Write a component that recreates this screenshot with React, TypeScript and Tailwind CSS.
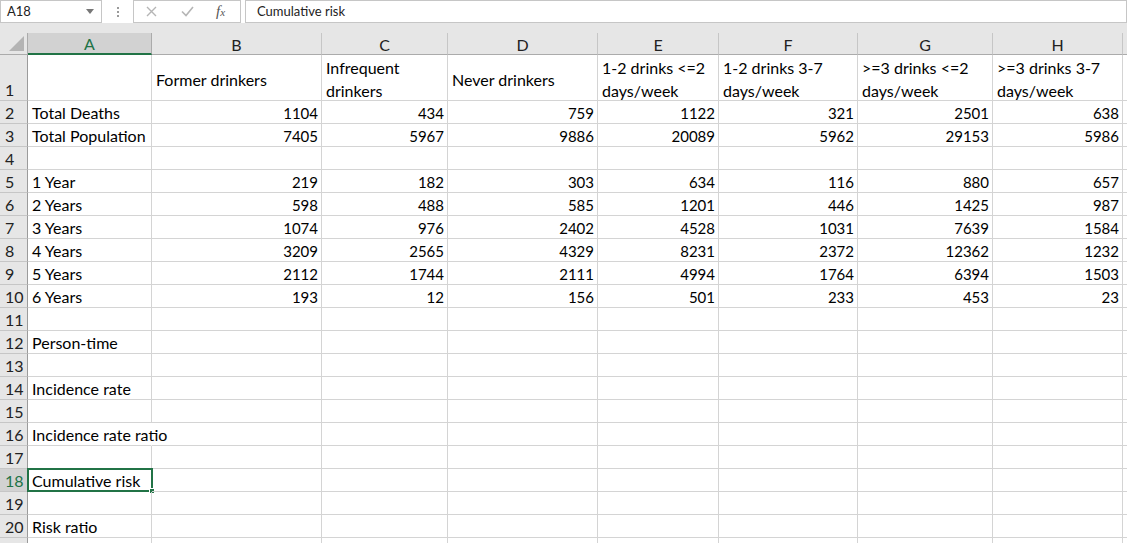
import React from 'react';

const COLS = ['A', 'B', 'C', 'D', 'E', 'F', 'G', 'H'];

type Row = { n: number; cells: (string | number)[]; tall?: boolean };

const ROWS: Row[] = [
  {
    n: 1,
    tall: true,
    cells: [
      '',
      'Former drinkers',
      'Infrequent drinkers',
      'Never drinkers',
      '1-2 drinks <=2 days/week',
      '1-2 drinks 3-7 days/week',
      '>=3 drinks <=2 days/week',
      '>=3 drinks 3-7 days/week',
    ],
  },
  { n: 2, cells: ['Total Deaths', 1104, 434, 759, 1122, 321, 2501, 638] },
  { n: 3, cells: ['Total Population', 7405, 5967, 9886, 20089, 5962, 29153, 5986] },
  { n: 4, cells: [] },
  { n: 5, cells: ['1 Year', 219, 182, 303, 634, 116, 880, 657] },
  { n: 6, cells: ['2 Years', 598, 488, 585, 1201, 446, 1425, 987] },
  { n: 7, cells: ['3 Years', 1074, 976, 2402, 4528, 1031, 7639, 1584] },
  { n: 8, cells: ['4 Years', 3209, 2565, 4329, 8231, 2372, 12362, 1232] },
  { n: 9, cells: ['5 Years', 2112, 1744, 2111, 4994, 1764, 6394, 1503] },
  { n: 10, cells: ['6 Years', 193, 12, 156, 501, 233, 453, 23] },
  { n: 11, cells: [] },
  { n: 12, cells: ['Person-time'] },
  { n: 13, cells: [] },
  { n: 14, cells: ['Incidence rate'] },
  { n: 15, cells: [] },
  { n: 16, cells: ['Incidence rate ratio'] },
  { n: 17, cells: [] },
  { n: 18, cells: ['Cumulative risk'] },
  { n: 19, cells: [] },
  { n: 20, cells: ['Risk ratio'] },
  { n: 21, cells: [] },
];

const SELECTED_ROW = 18;

function FormulaBar() {
  return (
    <div className="flex h-[23px] items-stretch bg-white text-[13px] text-[#222]">
      {/* name box */}
      <div className="flex w-[102px] items-center justify-between border border-[#c6c6c6] bg-white pl-[6px] pr-[7px]">
        <span>A18</span>
        <svg width="8" height="5" viewBox="0 0 8 5">
          <path d="M0 0h8L4 5z" fill="#777" />
        </svg>
      </div>
      <div className="flex w-[31px] flex-col items-center justify-center gap-[2px]">
        <span className="h-[2px] w-[2px] bg-[#9a9a9a]" />
        <span className="h-[2px] w-[2px] bg-[#9a9a9a]" />
        <span className="h-[2px] w-[2px] bg-[#9a9a9a]" />
      </div>
      <div className="flex w-[108px] items-center border border-[#c6c6c6] bg-white pl-[12px]">
        <svg width="11" height="11" viewBox="0 0 11 11">
          <path d="M1 1l9 9M10 1l-9 9" stroke="#b5b5b5" strokeWidth="1.4" />
        </svg>
        <svg className="ml-[24px]" width="13" height="11" viewBox="0 0 13 11">
          <path d="M1 5.5l4 4L12 1" stroke="#b5b5b5" strokeWidth="1.6" fill="none" />
        </svg>
        <span className="ml-[22px] font-['Liberation_Serif',serif] text-[15px] italic text-[#555]">
          f<span className="text-[11px]">x</span>
        </span>
      </div>
      <div className="ml-[4px] flex flex-1 items-center border border-[#c6c6c6] bg-white pl-[11px]">
        Cumulative risk
      </div>
    </div>
  );
}

export default function App() {
  return (
    <div className="h-[543px] w-[1127px] overflow-hidden bg-white font-['Lato','Noto_Sans',sans-serif] text-[16px] text-black">
      <FormulaBar />
      <div className="h-[10px] bg-[#e6e6e6]" />
      <div className="grid grid-cols-[28px_124px_170px_126px_150px_121px_139px_135px_130px_1fr]">
        {/* column headers */}
        <div className="relative h-[22px] border-b border-r border-[#ababab] bg-[#e6e6e6]">
          <svg className="absolute bottom-[3px] right-[3px]" width="15" height="15" viewBox="0 0 15 15">
            <path d="M15 0V15H0z" fill="#b4b4b4" />
          </svg>
        </div>
        {COLS.map((c) => (
          <div
            key={c}
            className={
              c === 'A'
                ? 'flex h-[22px] items-center justify-center border-b-2 border-r border-b-[#217346] border-r-[#ababab] bg-[#d2d2d2] pt-[1px] text-[#217346]'
                : 'flex h-[22px] items-center justify-center border-b border-r border-b-[#ababab] border-r-[#c6c6c6] bg-[#e6e6e6] pt-[2px] text-[#222]'
            }
          >
            {c}
          </div>
        ))}
        <div className="h-[22px] border-b border-[#ababab] bg-[#e6e6e6]" />

        {ROWS.map((row) => {
          const h = row.tall ? 'h-[46px]' : 'h-[23px]';
          const sel = row.n === SELECTED_ROW;
          return (
            <React.Fragment key={row.n}>
              <div
                className={`flex ${h} items-end border-b border-r border-b-[#c6c6c6] border-r-[#9b9b9b] pl-[5px] leading-[20px] ${
                  sel ? 'bg-[#d2d2d2] text-[#217346]' : 'bg-[#e6e6e6] text-[#222]'
                }`}
              >
                {row.n === 21 ? '' : row.n}
              </div>
              {COLS.map((c, i) => {
                const v = row.cells[i];
                const isNum = typeof v === 'number';
                const overflow = row.n === 16 && i === 0;
                if (row.tall && i > 0) {
                  return (
                    <div
                      key={c}
                      className={`flex ${h} items-center border-b border-r border-[#d4d4d4] pl-[4px] pt-[3px] leading-[23px]`}
                    >
                      <span className="block">{v}</span>
                    </div>
                  );
                }
                return (
                  <div
                    key={c}
                    className={`relative flex ${h} items-end border-b leading-[20px] ${
                      overflow ? 'z-10 border-r border-b-[#d4d4d4] border-r-transparent' : 'border-r border-[#d4d4d4]'
                    } ${isNum ? 'justify-end pr-[3px] text-[15px]' : 'pl-[4px]'} whitespace-nowrap`}
                  >
                    {v}
                    {sel && i === 0 && (
                      <div className="pointer-events-none absolute -left-[1px] -top-[1px] bottom-[-1px] right-[-2px] border-2 border-[#217346]">
                        <div className="absolute -bottom-[4px] -right-[4px] h-[6px] w-[6px] border border-white bg-[#217346]" />
                      </div>
                    )}
                  </div>
                );
              })}
              <div className={`${h} border-b border-[#d4d4d4]`} />
            </React.Fragment>
          );
        })}
      </div>
    </div>
  );
}
